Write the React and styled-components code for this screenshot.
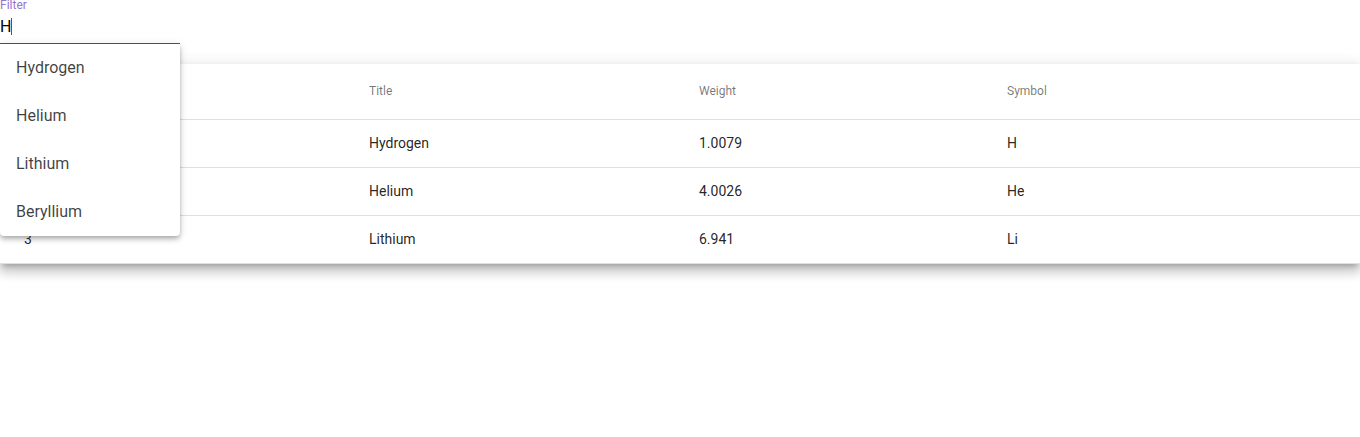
import React from "react";
import styled, { createGlobalStyle } from "styled-components";

const Global = createGlobalStyle`
  html, body { margin: 0; padding: 0; background: #fff; }
  body { font-family: Roboto, "Helvetica Neue", Arial, sans-serif; width: 1360px; height: 437px; overflow: hidden; }
`;

const Page = styled.div`
  position: relative;
  width: 1360px;
`;

const Field = styled.div`
  position: relative;
  width: 180px;
  height: 44px;
  display: flex;
  flex-direction: column;
  box-sizing: border-box;
  border-bottom: 1px solid #673ab7;
`;

const Label = styled.label`
  font-size: 12px;
  line-height: 10px;
  height: 10px;
  color: #9575cd;
`;

const InputWrap = styled.div`
  position: relative;
  margin-top: 8px;
  height: 16px;
`;

const Input = styled.input`
  display: block;
  border: none;
  outline: none;
  padding: 0;
  margin: 0;
  font: inherit;
  font-size: 16px;
  line-height: 16px;
  height: 16px;
  color: #000;
  caret-color: transparent;
  background: transparent;
  width: 100%;
`;

const Caret = styled.span`
  position: absolute;
  left: 11px;
  top: 0;
  width: 1px;
  height: 17px;
  background: #673ab7;
  pointer-events: none;
`;

const Panel = styled.div`
  position: absolute;
  top: 44px;
  left: 0;
  width: 180px;
  background: #fff;
  border-radius: 0 0 4px 4px;
  box-shadow: 0 2px 4px -1px rgba(0,0,0,.2), 0 4px 5px 0 rgba(0,0,0,.14), 0 1px 10px 0 rgba(0,0,0,.12);
  z-index: 10;
`;

const Option = styled.div`
  height: 48px;
  line-height: 47px;
  padding: 0 16px;
  font-size: 16px;
  color: rgba(0,0,0,.75);
`;

const Table = styled.div`
  margin-top: 20px;
  background: #fff;
  box-shadow: 0 5px 5px -3px rgba(0,0,0,.2), 0 8px 10px 1px rgba(0,0,0,.14), 0 3px 14px 2px rgba(0,0,0,.12);
`;

const Row = styled.div`
  display: grid;
  grid-template-columns: 369px 330px 308px 1fr;
  height: ${p => (p.$header ? 56 : 48)}px;
  align-items: center;
  border-bottom: 1px solid rgba(0,0,0,.12);
  box-sizing: border-box;
  padding-bottom: 2px;
`;

const Cell = styled.div`
  font-size: ${p => (p.$header ? 12 : 14)}px;
  font-weight: 400;
  color: ${p => (p.$header ? "rgba(0,0,0,.54)" : "rgba(0,0,0,.87)")};
  &:first-child { padding-left: 24px; }
`;

const elements = [
  { pos: 1, name: "Hydrogen", weight: "1.0079", symbol: "H" },
  { pos: 2, name: "Helium", weight: "4.0026", symbol: "He" },
  { pos: 3, name: "Lithium", weight: "6.941", symbol: "Li" },
];

const options = ["Hydrogen", "Helium", "Lithium", "Beryllium"];

export default function App() {
  return (
    <Page>
      <Global />
      <Field>
        <Label htmlFor="filter">Filter</Label>
        <InputWrap>
          <Input id="filter" defaultValue="H" />
          <Caret />
        </InputWrap>
      </Field>
      <Panel>
        {options.map(o => (
          <Option key={o}>{o}</Option>
        ))}
      </Panel>
      <Table>
        <Row $header>
          <Cell $header>No.</Cell>
          <Cell $header>Title</Cell>
          <Cell $header>Weight</Cell>
          <Cell $header>Symbol</Cell>
        </Row>
        {elements.map(e => (
          <Row key={e.pos}>
            <Cell>{e.pos}</Cell>
            <Cell>{e.name}</Cell>
            <Cell>{e.weight}</Cell>
            <Cell>{e.symbol}</Cell>
          </Row>
        ))}
      </Table>
    </Page>
  );
}
